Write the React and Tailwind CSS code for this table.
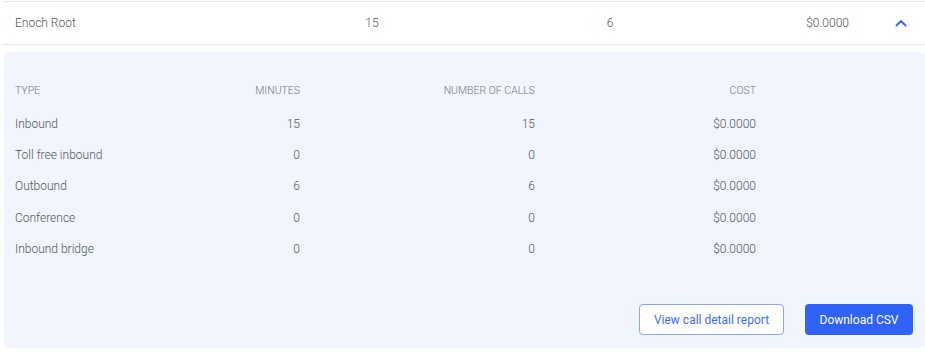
const USAGE = [
  { type: 'Inbound', minutes: 15, calls: 15, cost: '$0.0000' },
  { type: 'Toll free inbound', minutes: 0, calls: 0, cost: '$0.0000' },
  { type: 'Outbound', minutes: 6, calls: 6, cost: '$0.0000' },
  { type: 'Conference', minutes: 0, calls: 0, cost: '$0.0000' },
  { type: 'Inbound bridge', minutes: 0, calls: 0, cost: '$0.0000' },
]

const cols = 'grid grid-cols-[185px_100px_235px_221px_1fr] items-center'

function ChevronUp() {
  return (
    <svg width="12" height="8" viewBox="0 0 12 8" fill="none" stroke="#3b6cf4" strokeWidth="2" strokeLinecap="round" strokeLinejoin="round">
      <path d="M1.5 6.5 6 2l4.5 4.5" />
    </svg>
  )
}

export default function App() {
  return (
    <div className="w-[925px] h-[353px] bg-white text-[12px] font-light text-[#555] font-['Roboto','Liberation_Sans',sans-serif] overflow-hidden">
      <div className="ml-[3px] mt-[1px] border-t border-b border-[#e6e6e6] h-[44px] grid grid-cols-[297px_144px_332px_73px_1fr] items-center">
        <span className="pl-[12px]">Enoch Root</span>
        <span className="text-center">15</span>
        <span className="text-center">6</span>
        <span className="text-right">$0.0000</span>
        <span className="flex pl-[46px] pb-[1px]"><ChevronUp /></span>
      </div>

      <div className="ml-[4px] mt-[7px] h-[296px] rounded-[6px] bg-[#f0f5fe] pl-[11px] pt-[30px] flex flex-col">
        <div className={`${cols} text-[10.5px] text-[#777] h-[18px]`}>
          <span>TYPE</span>
          <span className="text-right">MINUTES</span>
          <span className="text-right">NUMBER OF CALLS</span>
          <span className="text-right">COST</span>
        </div>
        <div className="mt-[8px]">
          {USAGE.map(u => (
            <div key={u.type} className={`${cols} h-[31.4px]`}>
              <span>{u.type}</span>
              <span className="text-right">{u.minutes}</span>
              <span className="text-right">{u.calls}</span>
              <span className="text-right">{u.cost}</span>
            </div>
          ))}
        </div>
        <div className="mt-auto mb-[13px] flex justify-end gap-[21px] pr-[12px]">
          <button className="h-[31px] w-[145px] rounded-[4px] border border-[#86a6f7] bg-white text-[#3b6cf4] text-[12px] font-normal">
            View call detail report
          </button>
          <button className="h-[31px] w-[108px] rounded-[4px] bg-[#2f63f6] text-white text-[12px] font-normal">
            Download CSV
          </button>
        </div>
      </div>
    </div>
  )
}
